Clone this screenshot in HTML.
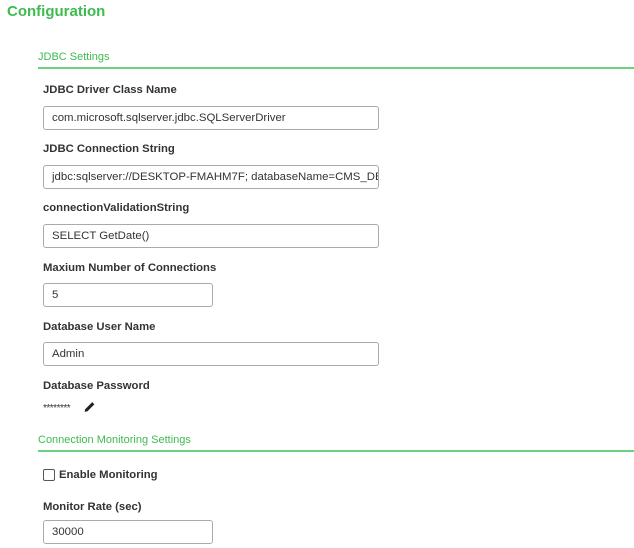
<!DOCTYPE html>
<html><head><style>
body{margin:0;width:634px;height:548px;background:#fff;font-family:"Liberation Sans",sans-serif;position:relative;overflow:hidden;color:#333}
.a{position:absolute}
h1{position:absolute;left:7px;top:3px;margin:0;font-size:15px;font-weight:bold;color:#3dbb50}
.sec{position:absolute;left:38px;right:0;font-size:11px;color:#3dbb50;border-bottom:2px solid #6dcf80;padding-bottom:2px;height:14px}
.lbl{position:absolute;left:43px;font-size:11.3px;font-weight:bold;color:#333}
.in{position:absolute;left:43px;height:22px;border:1px solid #aaa;border-radius:3px;font-size:11.4px;line-height:23px;padding-left:8px;box-sizing:content-box;color:#333;white-space:nowrap;overflow:hidden}
</style></head><body>
<h1>Configuration</h1>
<div class="sec" style="top:51px">JDBC Settings</div>
<div class="lbl" style="top:84px">JDBC Driver Class Name</div>
<div class="in" style="top:106px;width:326px">com.microsoft.sqlserver.jdbc.SQLServerDriver</div>
<div class="lbl" style="top:143px">JDBC Connection String</div>
<div class="in" style="top:165px;width:326px">jdbc:sqlserver://DESKTOP-FMAHM7F; databaseName=CMS_DB</div>
<div class="lbl" style="top:202px">connectionValidationString</div>
<div class="in" style="top:224px;width:326px">SELECT GetDate()</div>
<div class="lbl" style="top:262px">Maxium Number of Connections</div>
<div class="in" style="top:283px;width:160px">5</div>
<div class="lbl" style="top:321px">Database User Name</div>
<div class="in" style="top:342px;width:326px">Admin</div>
<div class="lbl" style="top:380px">Database Password</div>
<div class="a" style="left:43px;top:403px;font-size:10px;letter-spacing:-0.5px;color:#333">********</div>
<svg class="a" style="left:83px;top:400px" width="13" height="13" viewBox="0 0 12 12"><path d="M1.5 11 L2 8.5 L8.5 2 L10.5 4 L4 10.5 Z" fill="#222"/></svg>
<div class="sec" style="top:434px">Connection Monitoring Settings</div>
<div class="a" style="left:43px;top:469px;width:10px;height:10px;border:1px solid #555;border-radius:2px"></div>
<div class="lbl" style="left:59px;top:469px">Enable Monitoring</div>
<div class="lbl" style="top:501px">Monitor Rate (sec)</div>
<div class="in" style="top:520px;width:160px">30000</div>
</body></html>
